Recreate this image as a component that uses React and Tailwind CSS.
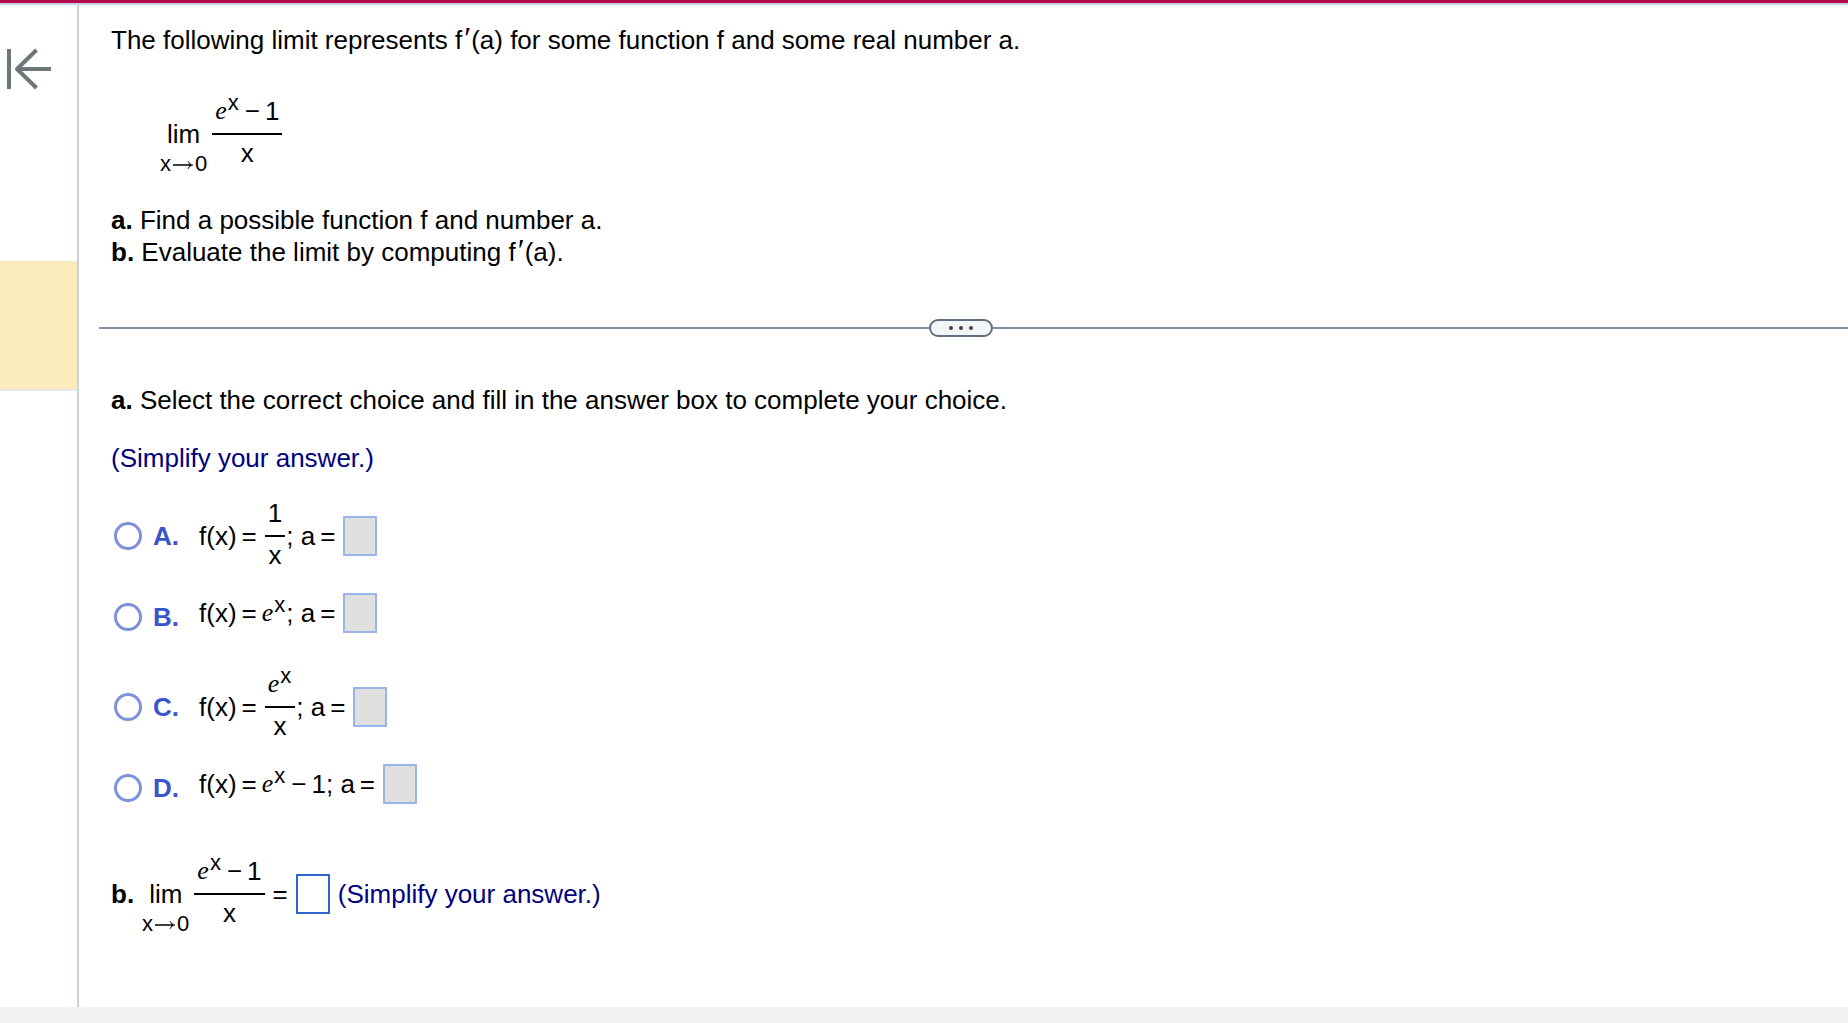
import React from "react";

function Exp() {
  return (
    <span className="flex">
      <i className="font-['Liberation_Serif',serif]">e</i>
      <sup className="static -mt-2 px-px align-baseline text-[22px] leading-8">x</sup>
    </span>
  );
}

function ExpMinusOne() {
  return (
    <span className="flex gap-[5px]">
      <Exp />
      <span>−</span>
      <span>1</span>
    </span>
  );
}

function Equals() {
  return <span className="mx-[5px]">=</span>;
}

function Fraction({ top, bottom }) {
  return (
    <span className="flex flex-col items-stretch">
      <span className="flex h-[38px] justify-center px-[3px]">{top}</span>
      <span className="h-0.5 bg-black" />
      <span className="flex h-[38px] justify-center pt-0.5">{bottom}</span>
    </span>
  );
}

function Limit() {
  return (
    <span className="flex items-center gap-[5px]">
      <span className="flex flex-col items-center pt-7">
        <span>lim</span>
        <span className="flex h-7 items-center text-[22px] leading-7">
          x
          <svg role="img" aria-label="approaches" viewBox="0 0 24 12" className="mt-0.5 h-3 w-6" fill="none" stroke="black">
            <path d="M2 6h18" strokeWidth="1.500" />
            <path d="M17 2q1 3 5 4q-4 1-5 4l2-4z" fill="black" strokeWidth="0.500" />
          </svg>
          0
        </span>
      </span>
      <Fraction top={<ExpMinusOne />} bottom="x" />
    </span>
  );
}

function Prime() {
  return (
    <span className="pr-0.5 font-['Liberation_Serif',serif] text-[32px] leading-[0] italic">′</span>
  );
}

function Choice({ letter, children, className }) {
  const id = `choice-${letter}`;
  return (
    <div className={`flex ${className}`}>
      <div className="flex items-center pl-[3px]">
        <input
          id={id}
          type="radio"
          name="choice"
          className="size-7 shrink-0 appearance-none rounded-full border-[3px] border-[#7f90dc] bg-white checked:bg-[#3a55cc]"
        />
        <label htmlFor={id} className="ml-[11px] w-[46px] font-bold text-[#3a55cc]">
          {letter}.
        </label>
      </div>
      <div className="flex items-center">
        <span>f(x)</span>
        <Equals />
        {children}
        <span>; a</span>
        <Equals />
        <input
          type="text"
          disabled
          aria-label={`Value of a for choice ${letter}`}
          className="ml-[3px] h-10 w-[34px] border-2 border-[#9ab3e8] bg-[#dfdfdf] text-center"
        />
      </div>
    </div>
  );
}

export default function App() {
  return (
    <div className="flex min-h-screen flex-col bg-white font-['Liberation_Sans',Arial,sans-serif] text-[26px] leading-8 text-black">
      <header className="h-[5px] border-b-2 border-[#cccfe0] bg-[#b3084a]" />
      <div className="flex flex-1">
        <aside className="w-[79px] shrink-0 border-r-2 border-[#cccfe0]">
          <button type="button" aria-label="Collapse panel" className="mt-10 block h-12 w-14">
            <svg viewBox="0 0 56 48" className="h-12 w-14" fill="none" stroke="#6d7678" strokeWidth="4" strokeLinejoin="round">
              <path d="M9 4v40M17 24h34M36.500 5L17 24l19.500 19" />
            </svg>
          </button>
          <div className="mt-42 h-[130px] border-b-2 border-[#e6e7f0] bg-[#f9ebbb]" />
        </aside>
        <main className="min-w-0 flex-1 pt-[19px]">
          <section className="pl-8">
            <p>
              The following limit represents f<Prime />(a) for some function f and some real number a.
            </p>
            <div className="mt-[34px] pl-[49px]">
              <Limit />
            </div>
            <p className="mt-[26px]">
              <b>a.</b> Find a possible function f and number a.
            </p>
            <p>
              <b>b.</b> Evaluate the limit by computing f<Prime />(a).
            </p>
          </section>

          <div className="mt-[51px] flex items-center pl-5">
            <span className="h-0.5 flex-1 bg-[#8590a5]" />
            <button
              type="button"
              aria-label="Show more"
              className="flex h-[18px] w-16 items-center justify-center gap-1.5 rounded-full border-2 border-[#5f6f7f] bg-[#f3f5f7]"
            >
              <span className="size-1 rounded-full bg-[#444]" />
              <span className="size-1 rounded-full bg-[#444]" />
              <span className="size-1 rounded-full bg-[#444]" />
            </button>
            <span className="h-0.5 flex-1 bg-[#8590a5]" />
            <span className="h-0.5 w-[26px] bg-[#8590a5]" />
          </div>

          <section className="mt-[47px] pl-8">
            <p>
              <b>a.</b> Select the correct choice and fill in the answer box to complete your choice.
            </p>
            <p className="mt-[26px] text-[#000080]">(Simplify your answer.)</p>

            <Choice letter="A" className="mt-[23px] items-center">
              <span className="ml-[3px] mr-px">
                <Fraction top="1" bottom="x" />
              </span>
            </Choice>
            <Choice letter="B" className="mt-[18px] items-end">
              <Exp />
            </Choice>
            <Choice letter="C" className="mt-[35px] items-center">
              <span className="ml-[3px] mr-px">
                <Fraction top={<Exp />} bottom="x" />
              </span>
            </Choice>
            <Choice letter="D" className="mt-[18px] items-end">
              <ExpMinusOne />
            </Choice>

            <div className="mt-[46px] flex items-center">
              <b className="mr-2">b.</b>
              <Limit />
              <span className="mx-2">=</span>
              <input
                type="text"
                aria-label="Value of the limit"
                className="h-10 w-[34px] border-2 border-[#2f67cf] bg-white text-center"
              />
              <span className="ml-2 text-[#000080]">(Simplify your answer.)</span>
            </div>
          </section>
        </main>
      </div>
      <footer className="h-4 bg-[#f2f2f2]" />
    </div>
  );
}
